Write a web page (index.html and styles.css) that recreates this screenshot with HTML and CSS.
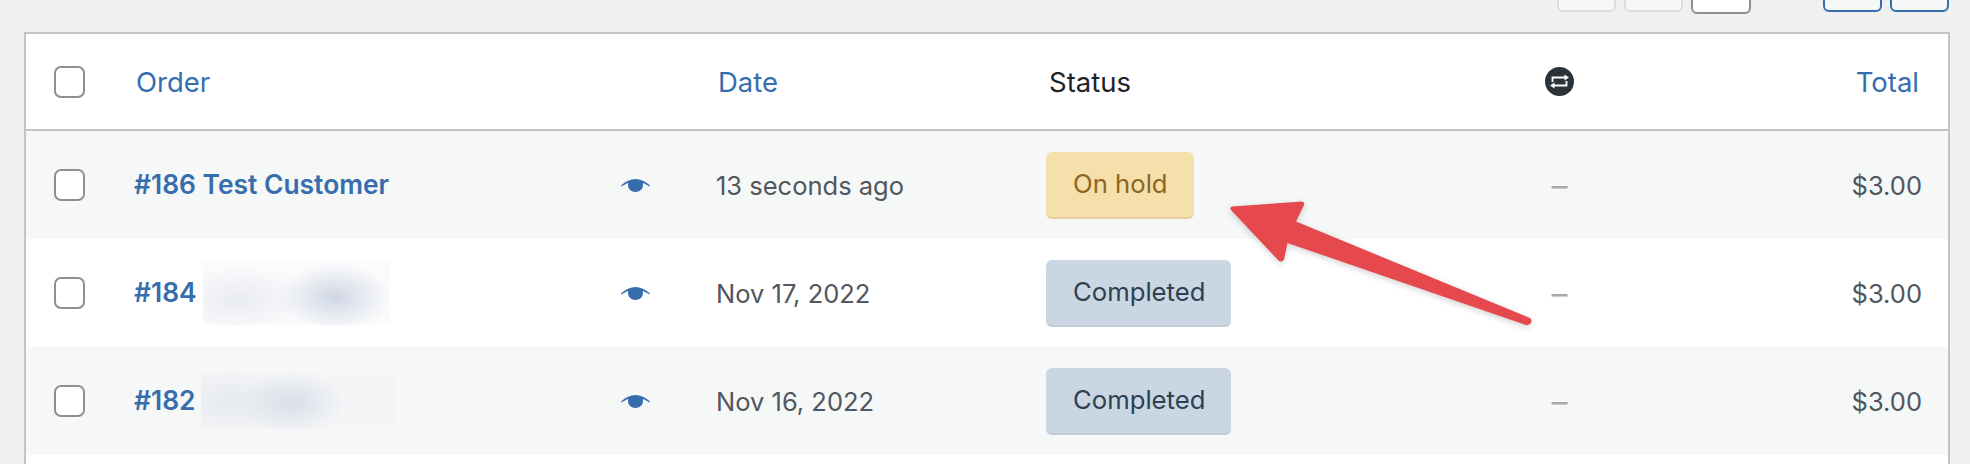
FILE: index.html
```html
<!DOCTYPE html>
<html lang="en">
<head>
<meta charset="utf-8">
<title>Orders</title>
<link rel="stylesheet" href="styles.css">
</head>
<body>
<div class="page">
  <div class="toolbar">
    <span class="btn btn-off"></span>
    <span class="btn btn-off"></span>
    <span class="btn btn-cur"></span>
    <span class="btn btn-link btn-gap"></span>
    <span class="btn btn-link"></span>
  </div>
  <div class="orders">
    <div class="row head">
      <span class="cell check"><input class="box" type="checkbox"></span>
      <span class="cell th-order wide"><a class="link">Order</a></span>
      <span class="cell th-date"><a class="link">Date</a></span>
      <span class="cell th-status">Status</span>
      <span class="cell icon-cell">
        <svg class="sub-icon" viewBox="0 0 29 29" aria-hidden="true">
          <circle cx="14.5" cy="14.5" r="14.5" fill="#2c3338"/>
          <path d="M7.500 15V10.500H20M21.500 14V18.500H9" fill="none" stroke="#fff" stroke-width="1.8"/>
          <path d="M19.500 7.500L24 10.500L19.500 13.500ZM9.500 15.500L5 18.500L9.500 21.500Z" fill="#fff"/>
        </svg>
      </span>
      <span class="cell total"><a class="link">Total</a></span>
    </div>

    <div class="row alt">
      <span class="cell check"><input class="box" type="checkbox"></span>
      <span class="cell name"><a class="link strong">#186 Test Customer</a></span>
      <span class="cell eye-cell">
        <svg class="eye" viewBox="0 0 29 13" aria-hidden="true"><path d="M0 6.500C4.500 2.300 9.500 0 14.500 0S24.500 2.300 29 6.500L28.300 7.600C26 5.900 23.800 4.800 21.700 4.100C21.900 4.700 22 5.300 22 6C22 9.900 18.700 13 14.500 13S7 9.900 7 6C7 5.300 7.100 4.700 7.300 4.100C5.200 4.800 3 5.900 0.700 7.600Z"/></svg>
      </span>
      <span class="cell date">13 seconds ago</span>
      <span class="cell status"><mark class="badge on-hold">On hold</mark></span>
      <span class="cell dash">–</span>
      <span class="cell amount">$3.00</span>
    </div>

    <div class="row">
      <span class="cell check"><input class="box" type="checkbox"></span>
      <span class="cell name"><a class="link strong">#184</a><span class="blur blur-a"></span></span>
      <span class="cell eye-cell">
        <svg class="eye" viewBox="0 0 29 13" aria-hidden="true"><path d="M0 6.500C4.500 2.300 9.500 0 14.500 0S24.500 2.300 29 6.500L28.300 7.600C26 5.900 23.800 4.800 21.700 4.100C21.900 4.700 22 5.300 22 6C22 9.900 18.700 13 14.500 13S7 9.900 7 6C7 5.300 7.100 4.700 7.300 4.100C5.200 4.800 3 5.900 0.700 7.600Z"/></svg>
      </span>
      <span class="cell date">Nov 17, 2022</span>
      <span class="cell status"><mark class="badge completed">Completed</mark></span>
      <span class="cell dash">–</span>
      <span class="cell amount">$3.00</span>
    </div>

    <div class="row alt">
      <span class="cell check"><input class="box" type="checkbox"></span>
      <span class="cell name"><a class="link strong">#182</a><span class="blur blur-b"></span></span>
      <span class="cell eye-cell">
        <svg class="eye" viewBox="0 0 29 13" aria-hidden="true"><path d="M0 6.500C4.500 2.300 9.500 0 14.500 0S24.500 2.300 29 6.500L28.300 7.600C26 5.900 23.800 4.800 21.700 4.100C21.900 4.700 22 5.300 22 6C22 9.900 18.700 13 14.500 13S7 9.900 7 6C7 5.300 7.100 4.700 7.300 4.100C5.200 4.800 3 5.900 0.700 7.600Z"/></svg>
      </span>
      <span class="cell date">Nov 16, 2022</span>
      <span class="cell status"><mark class="badge completed">Completed</mark></span>
      <span class="cell dash">–</span>
      <span class="cell amount">$3.00</span>
    </div>
    <div class="row-tail"></div>
  </div>
  <svg class="arrow" viewBox="0 0 1970 464" aria-hidden="true">
    <path d="M1232 206.500L1302 201.500Q1305 202 1304 205L1296 221.500L1530 318Q1533 321 1530 324Q1528 325.500 1526 325L1287.500 243L1284 259.500Q1282 263 1278.500 260.500L1230.500 209.500Q1230 207 1232 206.500Z"/>
  </svg>
</div>
</body>
</html>
```
FILE: styles.css
```css
* { box-sizing: border-box; }
html, body { margin: 0; height: 464px; overflow: hidden; }
body {
  background: #f0f0f1;
  font-family: Inter, "Liberation Sans", sans-serif;
  font-size: 25.5px;
  color: #50575e;
}
.page { position: relative; height: 464px; }

.toolbar {
  height: 32px;
  padding: 0 21px 20px 0;
  display: flex;
  justify-content: flex-end;
  align-items: flex-end;
  gap: 8px;
  overflow: hidden;
}
.btn {
  flex: none;
  width: 59px;
  height: 30px;
  border: 2px solid #dcdcde;
  border-radius: 6px;
  background: #f6f7f7;
}
.btn-cur { width: 60px; height: 32px; margin-bottom: -2px; border-color: #8c8f94; background: #fff; }
.btn-link { border-color: #366ead; background: #f6f7f7; }
.btn-gap { margin-left: 64px; }

.orders {
  margin: 0 20px 0 24px;
  background: #fff;
  border: 2px solid #c3c4c7;
  border-bottom: 0;
}
.row {
  display: grid;
  grid-template-columns: 108px 486px 96px 330px 499px 29px 1fr;
  align-items: center;
  height: 108px;
}
.row.head { height: 97px; border-bottom: 2px solid #c3c4c7; font-size: 27.5px; }
.row.alt { background: #f6f7f7; }
.row-tail { height: 20px; }
.cell { display: flex; align-items: center; min-width: 0; }
.wide { grid-column: span 2; }

.check { padding-left: 28px; }
.box {
  appearance: none;
  display: block;
  margin: 0;
  width: 31px;
  height: 32px;
  border: 2px solid #8c8f94;
  border-radius: 7px;
  background: #fff;
}
.link { color: #366ead; }
.strong { font-weight: 600; font-size: 26.4px; margin-bottom: 2px; }
.th-order { padding-left: 2px; }
.th-date { padding-left: 2px; }
.th-status { padding-left: 3px; color: #1d2327; }
.icon-cell { justify-content: center; }
.total { justify-content: flex-end; padding-right: 29px; }
.sub-icon { display: block; width: 29px; height: 29px; }
.eye { display: block; width: 29px; height: 13px; fill: #366ead; }
.eye-cell { padding-left: 1px; }
.name { height: 64px; }
.blur { display: block; flex: none; margin-left: 6px; }
.blur-a {
  width: 187px;
  height: 64px;
  background:
    radial-gradient(ellipse 56px 34px at 132px 36px, rgba(205,213,227,.95), rgba(205,213,227,0)),
    radial-gradient(ellipse 70px 34px at 36px 38px, rgba(226,230,238,.75), rgba(226,230,238,0)),
    #fbfbfc;
}
.blur-b {
  width: 195px;
  height: 56px;
  background:
    radial-gradient(ellipse 52px 32px at 92px 30px, rgba(216,222,232,.95), rgba(216,222,232,0)),
    radial-gradient(ellipse 80px 34px at 30px 28px, rgba(226,230,236,.75), rgba(226,230,236,0)),
    #f4f5f7;
}
.badge {
  display: inline-flex;
  align-items: center;
  height: 67px;
  padding: 0 26px 0 27px;
  border-radius: 6px;
  font-size: 25.7px;
  line-height: 1;
}
.on-hold { background: #f5dfab; color: #8f6520; border-bottom: 2px solid #e8d19f; }
.completed { background: #cad6e1; color: #2e4053; border-bottom: 2px solid #bfcbd6; }
.dash { justify-content: center; color: #a7aaad; font-size: 32px; }
.amount { justify-content: flex-end; padding-right: 26px; }

.arrow {
  position: absolute;
  left: 0;
  top: 0;
  width: 1970px;
  height: 464px;
  fill: #e5484d;
  filter: drop-shadow(0 2px 3px rgba(0,0,0,.18));
  pointer-events: none;
}
```
